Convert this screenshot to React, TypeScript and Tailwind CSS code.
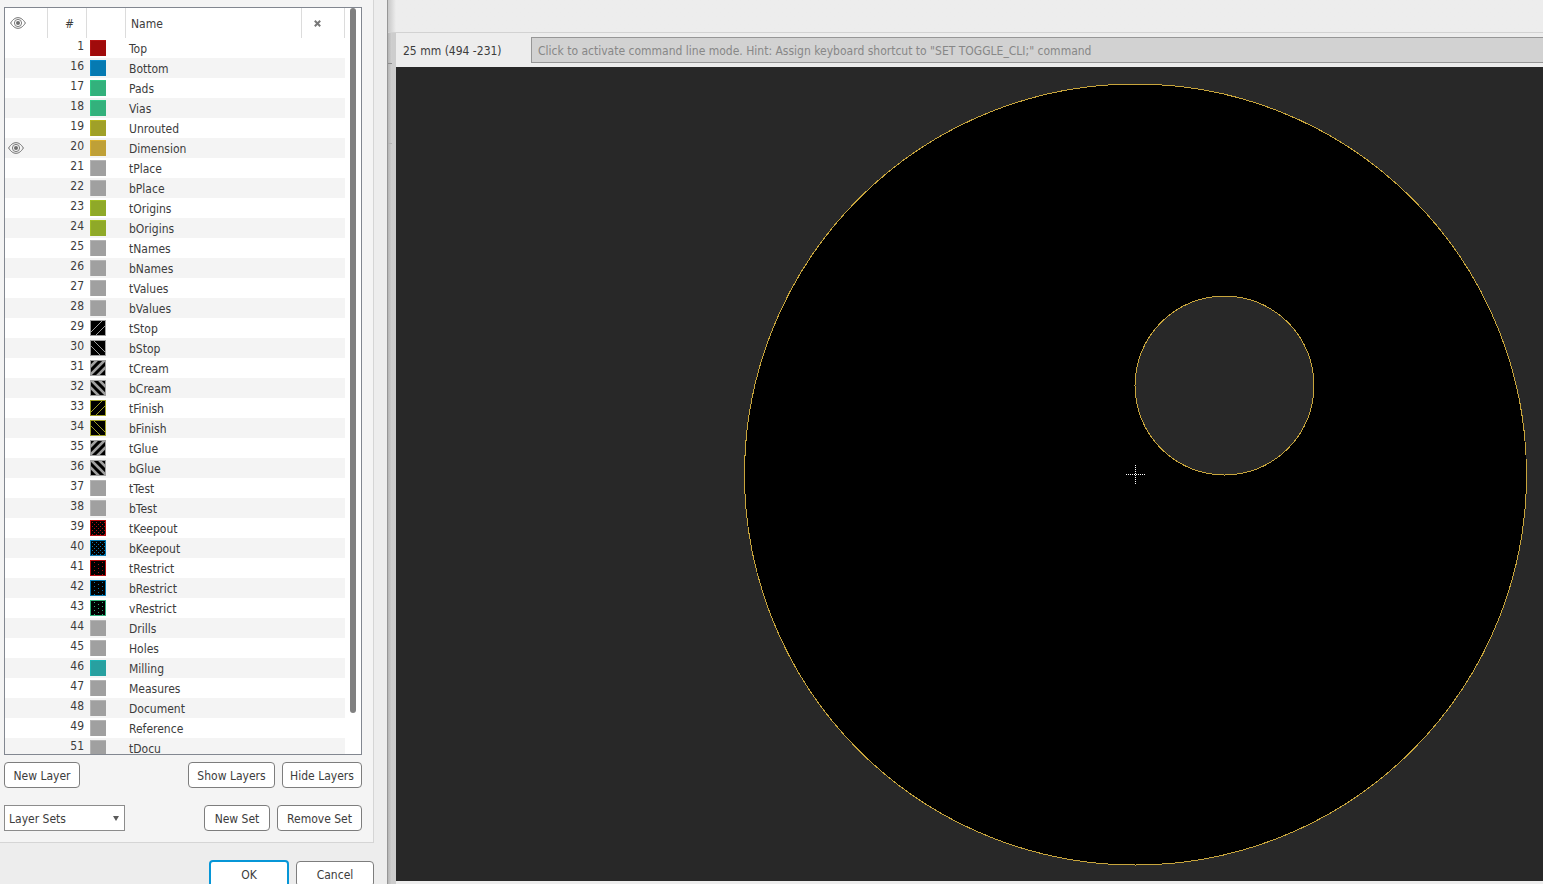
import { useState } from 'react'

type Fill = 'solid' | 'slash' | 'backslash' | 'slashBold' | 'backslashBold' | 'dots' | 'sparse'

type Layer = {
  id: number
  name: string
  color: string
  edge?: string
  fill?: Fill
}

const layers: Layer[] = [
  { id: 1, name: 'Top', color: '#a00b0b', edge: '#b41414' },
  { id: 16, name: 'Bottom', color: '#067ab2', edge: '#0a8bcb' },
  { id: 17, name: 'Pads', color: '#33b17c', edge: '#2fc886' },
  { id: 18, name: 'Vias', color: '#33b17c', edge: '#2fc886' },
  { id: 19, name: 'Unrouted', color: '#a0a028', edge: '#b4b41e' },
  { id: 20, name: 'Dimension', color: '#bfa037', edge: '#d8b02c' },
  { id: 21, name: 'tPlace', color: '#a0a0a0', edge: '#b4b4b4' },
  { id: 22, name: 'bPlace', color: '#a0a0a0', edge: '#b4b4b4' },
  { id: 23, name: 'tOrigins', color: '#8fa928', edge: '#9fbc24' },
  { id: 24, name: 'bOrigins', color: '#8fa928', edge: '#9fbc24' },
  { id: 25, name: 'tNames', color: '#a0a0a0', edge: '#b4b4b4' },
  { id: 26, name: 'bNames', color: '#a0a0a0', edge: '#b4b4b4' },
  { id: 27, name: 'tValues', color: '#a0a0a0', edge: '#b4b4b4' },
  { id: 28, name: 'bValues', color: '#a0a0a0', edge: '#b4b4b4' },
  { id: 29, name: 'tStop', color: '#a0a0a0', fill: 'slash' },
  { id: 30, name: 'bStop', color: '#a0a0a0', fill: 'backslash' },
  { id: 31, name: 'tCream', color: '#a0a0a0', fill: 'slashBold' },
  { id: 32, name: 'bCream', color: '#a0a0a0', fill: 'backslashBold' },
  { id: 33, name: 'tFinish', color: '#a0a028', fill: 'slash' },
  { id: 34, name: 'bFinish', color: '#a0a028', fill: 'backslash' },
  { id: 35, name: 'tGlue', color: '#a0a0a0', fill: 'slashBold' },
  { id: 36, name: 'bGlue', color: '#a0a0a0', fill: 'backslashBold' },
  { id: 37, name: 'tTest', color: '#a0a0a0', edge: '#b4b4b4' },
  { id: 38, name: 'bTest', color: '#a0a0a0', edge: '#b4b4b4' },
  { id: 39, name: 'tKeepout', color: '#b40f0f', fill: 'dots' },
  { id: 40, name: 'bKeepout', color: '#067ab2', fill: 'dots' },
  { id: 41, name: 'tRestrict', color: '#b40f0f', fill: 'sparse' },
  { id: 42, name: 'bRestrict', color: '#067ab2', fill: 'sparse' },
  { id: 43, name: 'vRestrict', color: '#33b17c', fill: 'sparse' },
  { id: 44, name: 'Drills', color: '#a0a0a0', edge: '#b4b4b4' },
  { id: 45, name: 'Holes', color: '#a0a0a0', edge: '#b4b4b4' },
  { id: 46, name: 'Milling', color: '#28a0a0', edge: '#1eb4b4' },
  { id: 47, name: 'Measures', color: '#a0a0a0', edge: '#b4b4b4' },
  { id: 48, name: 'Document', color: '#a0a0a0', edge: '#b4b4b4' },
  { id: 49, name: 'Reference', color: '#a0a0a0', edge: '#b4b4b4' },
  { id: 51, name: 'tDocu', color: '#a0a0a0', edge: '#b4b4b4' },
]

const hatches: Partial<Record<Fill, string>> = {
  slash: 'M0 13L13 0M5 16L16 5',
  backslash: 'M3 0L16 13M0 5L11 16',
  slashBold: 'M0 7L7 0M0 15L15 0M7 16L16 7',
  backslashBold: 'M9 0L16 7M1 0L16 15M0 7L9 16',
}

function dotPath(fill: Fill) {
  let d = ''
  for (let y = 2; y < 15; y += 2) {
    for (let x = 2; x < 15; x += 2) {
      if (fill === 'dots' && (x + y) % 4 === 0) d += `M${x} ${y}h1v1h-1z`
      if (fill === 'sparse' && x % 4 === 0 && (y + (x % 8 === 0 ? 0 : 2)) % 4 === 0) d += `M${x} ${y}h1v1h-1z`
    }
  }
  return d
}

function Swatch({ color, edge, fill = 'solid' }: Layer) {
  if (fill === 'solid') {
    return (
      <svg viewBox="0 0 16 16" className="block h-4 w-4" shapeRendering="crispEdges">
        <rect width="16" height="16" fill={color} />
        <path d="M0 0H16V1H1V16H0z" fill={edge} />
      </svg>
    )
  }
  const bold = fill === 'slashBold' || fill === 'backslashBold'
  return (
    <svg viewBox="0 0 16 16" className="block h-4 w-4">
      <rect width="16" height="16" fill="#000" />
      {hatches[fill] ? (
        <path d={hatches[fill]} stroke={color} strokeWidth={bold ? 2.6 : 1} />
      ) : (
        <path d={dotPath(fill)} fill={color} shapeRendering="crispEdges" />
      )}
      <rect x="0.5" y="0.5" width="15" height="15" fill="none" stroke={color} />
    </svg>
  )
}

function Eye() {
  return (
    <svg viewBox="0 0 16 12" className="block h-3 w-4" fill="none" stroke="#6e6e6e">
      <path d="M0.6 6C3 2.2 5.4 0.7 8 0.7S13 2.2 15.4 6C13 9.8 10.6 11.3 8 11.3S3 9.8 0.6 6z" />
      <circle cx="8" cy="6" r="3.6" strokeWidth="0.9" />
      <circle cx="8" cy="6" r="2" fill="#6e6e6e" stroke="none" />
    </svg>
  )
}

const button = 'h-[26px] rounded border border-[#7d7d7d] bg-white pt-[2px] text-center'

function LayerTable({ visible, onToggle }: { visible: number[]; onToggle: (id: number) => void }) {
  return (
    <div className="flex h-[748px] justify-between overflow-hidden border border-[#828790] bg-white">
      <table className="w-[340px] table-fixed border-separate border-spacing-0 self-start">
        <colgroup>
          <col className="w-[43px]" />
          <col className="w-[39px]" />
          <col className="w-[39px]" />
          <col className="w-[176px]" />
          <col className="w-[43px]" />
        </colgroup>
        <thead>
          <tr className="h-[30px]">
            <th className="border-r border-[#dcdcdc] p-0 pl-[5px]"><Eye /></th>
            <th className="border-r border-[#dcdcdc] p-0 pt-[2px] pl-[5px] font-normal">#</th>
            <th className="border-r border-[#dcdcdc] p-0" />
            <th className="border-r border-[#dcdcdc] p-0 pt-[2px] pl-[5px] text-left font-normal">Name</th>
            <th className="border-r border-[#dcdcdc] p-0">
              <svg viewBox="0 0 7 7" className="ml-3 block h-[7px] w-[7px]" stroke="#777" strokeWidth="2">
                <path d="M0.8 0.8L6.2 6.2M6.2 0.8L0.8 6.2" />
              </svg>
            </th>
          </tr>
        </thead>
        <tbody>
          {layers.map((layer) => (
            <tr key={layer.id} className="h-5 even:bg-[#f4f4f4]" onClick={() => onToggle(layer.id)}>
              <td className="p-0 pl-[3px]">{visible.includes(layer.id) && <Eye />}</td>
              <td className="p-0 pr-[3px] text-right align-top leading-4">{layer.id}</td>
              <td className="p-0 pl-[3px]"><Swatch {...layer} /></td>
              <td className="p-0 pl-[3px] align-bottom leading-[18px]" colSpan={2}>{layer.name}</td>
            </tr>
          ))}
        </tbody>
      </table>
      <div className="mr-[5px] h-[705px] w-[6px] rounded-full bg-[#808080]" />
    </div>
  )
}

function Board() {
  return (
    <svg
      viewBox="0 0 1147 814"
      preserveAspectRatio="xMaxYMin meet"
      className="h-full w-full"
      fill="none"
      shapeRendering="crispEdges"
    >
      <ellipse cx="739.5" cy="407.5" rx="391" ry="390.5" fill="#000" stroke="#c8a53c" />
      <circle cx="828.5" cy="318.5" r="89.5" fill="#282828" stroke="#c8a53c" />
      <path d="M730 407.5H749M739.5 398V417" stroke="#fff" strokeDasharray="1 1" />
    </svg>
  )
}

export default function App() {
  const [visible, setVisible] = useState([20])

  const toggle = (id: number) => {
    setVisible((ids) => (ids.includes(id) ? ids.filter((v) => v !== id) : [...ids, id]))
  }

  return (
    <div className="flex h-screen overflow-hidden bg-[#ededed] font-['DejaVu_Sans_Condensed','Noto_Sans',sans-serif] text-xs text-[#3c3c3c]">
      {/* layer settings dialog */}
      <section className="w-[388px] shrink-0 border-r border-[#969696]">
        <div className="w-[374px] border-r border-b border-[#d5d5d5] bg-[#f4f4f4] pt-[7px] pr-[11px] pb-[11px] pl-1">
          <LayerTable visible={visible} onToggle={toggle} />
          <div className="mt-[7px] flex gap-[7px]">
            <button className={`${button} mr-auto w-[76px]`}>New Layer</button>
            <button className={`${button} w-[87px]`}>Show Layers</button>
            <button className={`${button} w-[80px]`}>Hide Layers</button>
          </div>
          <div className="mt-[17px] flex gap-[7px]">
            <div className="relative mr-auto">
              <select
                aria-label="Layer sets"
                className="h-[26px] w-[121px] appearance-none border border-[#8c8c8c] bg-white pt-[2px] pl-1"
              >
                <option>Layer Sets</option>
              </select>
              <svg viewBox="0 0 6 5" className="pointer-events-none absolute top-[11px] right-[6px] h-[5px] w-[6px]" fill="#5a5a5a">
                <path d="M0 0H6L3 5z" />
              </svg>
            </div>
            <button className={`${button} w-[66px]`}>New Set</button>
            <button className={`${button} w-[85px]`}>Remove Set</button>
          </div>
        </div>
        <div className="mt-[17px] flex w-[374px] justify-end gap-[7px]">
          <button className="h-7 w-[80px] rounded border-2 border-[#0696d7] bg-white pt-[2px]">OK</button>
          <button className={`${button} mt-px w-[78px]`}>Cancel</button>
        </div>
      </section>

      {/* editor window behind the dialog */}
      <main className="flex min-w-0 flex-1 flex-col">
        <div className="h-8 shrink-0 bg-linear-to-r from-[#c8c8c8] via-[#ededed] via-[8px] to-[#ededed]" />
        <div className="flex min-h-0 flex-1 border-t border-[#d2d2d2]">
          <div className="flex w-1 shrink-0 flex-col bg-linear-to-r from-[#b4b4b4] to-[#d2d2d2]">
            <div className="h-[31px] border-b border-[#8c8c8c]" />
            <div className="h-20 border-b border-[#b4b4b4]" />
          </div>
          <div className="w-1 shrink-0 bg-[#cdcdcd]" />
          <div className="flex min-w-0 flex-1 flex-col">
            <div className="flex h-[34px] shrink-0 items-center pl-[7px]">
              <span className="w-32 shrink-0 pt-[2px]">25 mm (494 -231)</span>
              <input
                aria-label="Command line"
                placeholder={'Click to activate command line mode. Hint: Assign keyboard shortcut to "SET TOGGLE_CLI;" command'}
                className="h-[26px] min-w-0 flex-1 border border-r-0 border-[#969696] bg-[#d2d2d2] pt-[2px] pl-[6px] placeholder:text-[#878787]"
              />
            </div>
            <div className="min-h-0 flex-1 bg-[#282828]">
              <Board />
            </div>
            <div className="h-[3px] shrink-0" />
          </div>
        </div>
      </main>
    </div>
  )
}
